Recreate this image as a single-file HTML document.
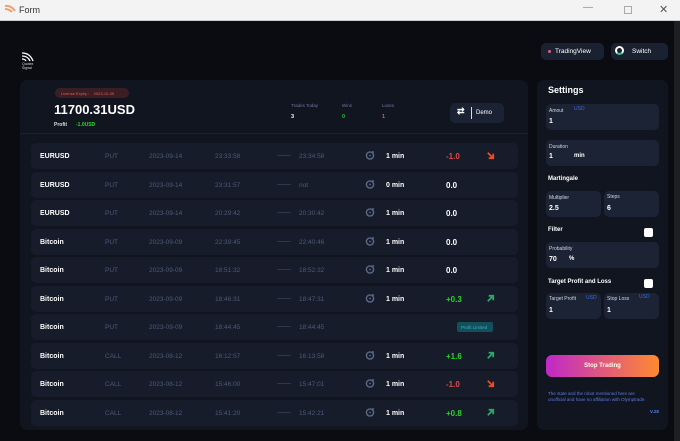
<!DOCTYPE html>
<html><head><meta charset="utf-8"><style>
*{margin:0;padding:0;box-sizing:border-box}
body{width:680px;height:441px;overflow:hidden;background:#0a0c12;font-family:"Liberation Sans",sans-serif;position:relative;color:#fff}
.a{position:absolute}
.tb{left:0;top:0;width:680px;height:21px;background:#f3f3f3;border-bottom:1px solid #ccc}
.b{font-weight:bold}
.row{position:absolute;left:31px;width:487px;height:26px;background:#161c2a;border-radius:5px;font-size:6.5px}
.row span,.row svg{position:absolute;top:10px}
.g{color:#4d5a78}
.w{color:#fff;font-weight:bold;font-size:7px}
.box{position:absolute;background:#1b2334;border-radius:5px}
.lab{position:absolute;font-size:5px;color:#d0d6e0}
.val{position:absolute;font-size:7px;font-weight:bold}
.chk{position:absolute;width:9px;height:9px;background:#fff;border-radius:2px}
</style></head><body>
<div class="a tb"></div>
<svg class="a" style="left:4px;top:3px" width="12" height="10"><path d="M1 3 Q7 2 11 8 M1 6 Q5 6 8 9" stroke="#f0a070" stroke-width="2" fill="none"/></svg>
<div class="a" style="left:19px;top:5px;font-size:9px;color:#333">Form</div>
<div class="a" style="left:583px;top:2px;font-size:10px;color:#888">—</div>
<div class="a" style="left:624px;top:6px;width:8px;height:8px;border:1px solid #aaa"></div>
<div class="a" style="left:659px;top:3px;font-size:11px;color:#555">✕</div>
<div class="a" style="left:674px;top:21px;width:6px;height:420px;background:#1e1f22"></div>
<svg class="a" style="left:21px;top:51px" width="16" height="12"><path d="M1 2 Q9 2 12 10 M1 5 Q7 5 9 10 M1 8 Q4 8 5 10" stroke="#fff" stroke-width="1.3" fill="none"/></svg>
<div class="a" style="left:22px;top:62px;font-size:3.5px;color:#ddd;line-height:4px">Quotex<br>Signal</div>
<div class="a" style="left:541px;top:43px;width:63px;height:17px;background:#1a2232;border-radius:5px"></div>
<div class="a" style="left:548px;top:50px;width:3px;height:3px;border-radius:50%;background:#e06070"></div>
<div class="a" style="left:555px;top:48px;font-size:6.5px">TradingView</div>
<div class="a" style="left:611px;top:43px;width:57px;height:17px;background:#1a2232;border-radius:5px"></div>
<div class="a" style="left:615px;top:46px;width:9px;height:9px;border-radius:50%;border:2px solid #fff;border-bottom-color:#2c8"></div>
<div class="a" style="left:632px;top:48px;font-size:6.5px">Switch</div>
<div class="a" style="left:20px;top:80px;width:508px;height:350px;background:#111520;border-radius:7px"></div>
<div class="a" style="left:20px;top:133px;width:508px;height:1px;background:#1b2130"></div>
<div class="a" style="left:55px;top:88px;width:74px;height:10px;background:#3a1e24;border-radius:5px;font-size:4px;color:#e06060;padding:3px 0 0 6px">License Expiry :&nbsp;&nbsp;&nbsp;&nbsp;2023-10-05</div>
<div class="a b" style="left:54px;top:102px;font-size:13px">11700.31USD</div>
<div class="a b" style="left:54px;top:122px;font-size:5px;color:#ddd">Profit</div>
<div class="a b" style="left:76px;top:122px;font-size:5px;color:#2d2">-1.0USD</div>
<div class="a" style="left:291px;top:103px;font-size:4.5px;color:#6a7aa0">Trades Today</div>
<div class="a b" style="left:291px;top:114px;font-size:5.5px">3</div>
<div class="a" style="left:342px;top:103px;font-size:4.5px;color:#6a7aa0">Wins</div>
<div class="a b" style="left:342px;top:114px;font-size:5.5px;color:#2b2">0</div>
<div class="a" style="left:382px;top:103px;font-size:4.5px;color:#6a7aa0">Loses</div>
<div class="a b" style="left:382px;top:114px;font-size:5.5px;color:#e55">1</div>
<div class="a" style="left:450px;top:103px;width:54px;height:20px;background:#1b2233;border-radius:5px"></div>
<div class="a b" style="left:457px;top:106px;font-size:9px">⇄</div>
<div class="a" style="left:471px;top:107px;width:1px;height:12px;background:#ddd"></div>
<div class="a" style="left:476px;top:110px;font-size:6px">Demo</div>

<svg width="0" height="0" style="position:absolute"><defs>
<symbol id="clk" viewBox="0 0 10 10"><circle cx="5" cy="5.5" r="3.6" stroke="#5a6a8a" stroke-width="1.4" fill="none"/><circle cx="5" cy="5.5" r="0.9" fill="#5a6a8a"/><path d="M7.5 1.2 L8.8 2.5" stroke="#5a6a8a" stroke-width="1.3"/></symbol>
<symbol id="dn" viewBox="0 0 10 10"><path d="M2 2 L8 8 M3 8 H8 V3" stroke="#e5502a" stroke-width="2" fill="none"/></symbol>
<symbol id="up" viewBox="0 0 10 10"><path d="M2 8 L8 2 M3 2 H8 V7" stroke="#2aa86a" stroke-width="2" fill="none"/></symbol>
</defs></svg>

<div class="row" style="top:143px"><span class="w" style="left:9px">EURUSD</span><span class="g" style="left:74px">PUT</span><span class="g" style="left:118px">2023-09-14</span><span class="g" style="left:184px">23:33:58</span><span class="g" style="left:246px;top:9px">——·</span><span class="g" style="left:268px">23:34:58</span><svg style="left:334px;top:7px" width="10" height="10"><use href="#clk"/></svg><span class="w" style="left:355px">1 min</span><span class="w" style="left:415px;color:#e04a4a;font-size:8px;top:9px">-1.0</span><svg style="left:455px;top:8px" width="9" height="9"><use href="#dn"/></svg></div>
<div class="row" style="top:171.5px"><span class="w" style="left:9px">EURUSD</span><span class="g" style="left:74px">PUT</span><span class="g" style="left:118px">2023-09-14</span><span class="g" style="left:184px">23:31:57</span><span class="g" style="left:246px;top:9px">——·</span><span class="g" style="left:268px">not</span><svg style="left:334px;top:7px" width="10" height="10"><use href="#clk"/></svg><span class="w" style="left:355px">0 min</span><span class="w" style="left:415px;font-size:8px;top:9px">0.0</span></div>
<div class="row" style="top:200px"><span class="w" style="left:9px">EURUSD</span><span class="g" style="left:74px">PUT</span><span class="g" style="left:118px">2023-09-14</span><span class="g" style="left:184px">20:29:42</span><span class="g" style="left:246px;top:9px">——·</span><span class="g" style="left:268px">20:30:42</span><svg style="left:334px;top:7px" width="10" height="10"><use href="#clk"/></svg><span class="w" style="left:355px">1 min</span><span class="w" style="left:415px;font-size:8px;top:9px">0.0</span></div>
<div class="row" style="top:228.5px"><span class="w" style="left:9px">Bitcoin</span><span class="g" style="left:74px">PUT</span><span class="g" style="left:118px">2023-09-09</span><span class="g" style="left:184px">22:39:45</span><span class="g" style="left:246px;top:9px">——·</span><span class="g" style="left:268px">22:40:46</span><svg style="left:334px;top:7px" width="10" height="10"><use href="#clk"/></svg><span class="w" style="left:355px">1 min</span><span class="w" style="left:415px;font-size:8px;top:9px">0.0</span></div>
<div class="row" style="top:257px"><span class="w" style="left:9px">Bitcoin</span><span class="g" style="left:74px">PUT</span><span class="g" style="left:118px">2023-09-09</span><span class="g" style="left:184px">18:51:32</span><span class="g" style="left:246px;top:9px">——·</span><span class="g" style="left:268px">18:52:32</span><svg style="left:334px;top:7px" width="10" height="10"><use href="#clk"/></svg><span class="w" style="left:355px">1 min</span><span class="w" style="left:415px;font-size:8px;top:9px">0.0</span></div>
<div class="row" style="top:285.5px"><span class="w" style="left:9px">Bitcoin</span><span class="g" style="left:74px">PUT</span><span class="g" style="left:118px">2023-09-09</span><span class="g" style="left:184px">18:46:31</span><span class="g" style="left:246px;top:9px">——·</span><span class="g" style="left:268px">18:47:31</span><svg style="left:334px;top:7px" width="10" height="10"><use href="#clk"/></svg><span class="w" style="left:355px">1 min</span><span class="w" style="left:415px;color:#2ad42a;font-size:8px;top:9px">+0.3</span><svg style="left:455px;top:8px" width="9" height="9"><use href="#up"/></svg></div>
<div class="row" style="top:314px"><span class="w" style="left:9px">Bitcoin</span><span class="g" style="left:74px">PUT</span><span class="g" style="left:118px">2023-09-09</span><span class="g" style="left:184px">18:44:45</span><span class="g" style="left:246px;top:9px">——·</span><span class="g" style="left:268px">18:44:45</span><span style="left:426px;top:8px;width:36px;height:10px;background:#12505a;border-radius:2px;font-size:4.5px;color:#4ac;padding:2.5px 0 0 4px">Profit Limited</span></div>
<div class="row" style="top:342.5px"><span class="w" style="left:9px">Bitcoin</span><span class="g" style="left:74px">CALL</span><span class="g" style="left:118px">2023-08-12</span><span class="g" style="left:184px">16:12:57</span><span class="g" style="left:246px;top:9px">——·</span><span class="g" style="left:268px">16:13:58</span><svg style="left:334px;top:7px" width="10" height="10"><use href="#clk"/></svg><span class="w" style="left:355px">1 min</span><span class="w" style="left:415px;color:#2ad42a;font-size:8px;top:9px">+1.6</span><svg style="left:455px;top:8px" width="9" height="9"><use href="#up"/></svg></div>
<div class="row" style="top:371px"><span class="w" style="left:9px">Bitcoin</span><span class="g" style="left:74px">CALL</span><span class="g" style="left:118px">2023-08-12</span><span class="g" style="left:184px">15:46:00</span><span class="g" style="left:246px;top:9px">——·</span><span class="g" style="left:268px">15:47:01</span><svg style="left:334px;top:7px" width="10" height="10"><use href="#clk"/></svg><span class="w" style="left:355px">1 min</span><span class="w" style="left:415px;color:#e04a4a;font-size:8px;top:9px">-1.0</span><svg style="left:455px;top:8px" width="9" height="9"><use href="#dn"/></svg></div>
<div class="row" style="top:399.5px"><span class="w" style="left:9px">Bitcoin</span><span class="g" style="left:74px">CALL</span><span class="g" style="left:118px">2023-08-12</span><span class="g" style="left:184px">15:41:20</span><span class="g" style="left:246px;top:9px">——·</span><span class="g" style="left:268px">15:42:21</span><svg style="left:334px;top:7px" width="10" height="10"><use href="#clk"/></svg><span class="w" style="left:355px">1 min</span><span class="w" style="left:415px;color:#2ad42a;font-size:8px;top:9px">+0.8</span><svg style="left:455px;top:8px" width="9" height="9"><use href="#up"/></svg></div>

<div class="a" style="left:537px;top:80px;width:131px;height:350px;background:#111520;border-radius:7px"></div>
<div class="a b" style="left:548px;top:85px;font-size:9px">Settings</div>
<div class="box" style="left:546px;top:104px;width:113px;height:26px"></div>
<div class="lab" style="left:549px;top:108px">Amout</div><div class="lab" style="left:574px;top:106px;color:#3a6ae0">USD</div>
<div class="val" style="left:549px;top:118px">1</div>
<div class="box" style="left:546px;top:140px;width:113px;height:26px"></div>
<div class="lab" style="left:549px;top:144px">Duration</div>
<div class="val" style="left:549px;top:153px">1</div><div class="val" style="left:574px;top:153px;font-size:6px">min</div>
<div class="a b" style="left:548px;top:176px;font-size:6px">Martingale</div>
<div class="box" style="left:546px;top:191px;width:55px;height:26px"></div>
<div class="lab" style="left:549px;top:195px">Multiplier</div>
<div class="val" style="left:549px;top:205px">2.5</div>
<div class="box" style="left:604px;top:191px;width:55px;height:26px"></div>
<div class="lab" style="left:607px;top:194px">Steps</div>
<div class="val" style="left:607px;top:205px">6</div>
<div class="a b" style="left:548px;top:227px;font-size:6px">Filter</div>
<div class="chk" style="left:644px;top:228px"></div>
<div class="box" style="left:546px;top:242px;width:113px;height:26px"></div>
<div class="lab" style="left:549px;top:246px">Probability</div>
<div class="val" style="left:549px;top:256px">70</div><div class="val" style="left:569px;top:256px;font-size:6px">%</div>
<div class="a b" style="left:548px;top:279px;font-size:6px">Target Profit and Loss</div>
<div class="chk" style="left:644px;top:279px"></div>
<div class="box" style="left:546px;top:293px;width:55px;height:26px"></div>
<div class="lab" style="left:549px;top:296px">Target Profit</div><div class="lab" style="left:586px;top:295px;color:#3a6ae0">USD</div>
<div class="val" style="left:549px;top:307px">1</div>
<div class="box" style="left:604px;top:293px;width:55px;height:26px"></div>
<div class="lab" style="left:607px;top:296px">Stop Loss</div><div class="lab" style="left:639px;top:294px;color:#3a6ae0">USD</div>
<div class="val" style="left:607px;top:307px">1</div>
<div class="a b" style="left:546px;top:355px;width:113px;height:22px;border-radius:6px;background:linear-gradient(90deg,#c028c8,#ff8a30);font-size:6px;text-align:center;padding-top:8px;color:#ffe">Stop Trading</div>
<div class="a" style="left:548px;top:391px;width:105px;font-size:4.5px;line-height:5.5px;color:#5a7ae0">The state and the robot mentioned here are unofficial and have no affiliation with Olymptrade.</div>
<div class="a b" style="left:650px;top:409px;font-size:4.5px;color:#5a7ae0">V.28</div>
</body></html>
